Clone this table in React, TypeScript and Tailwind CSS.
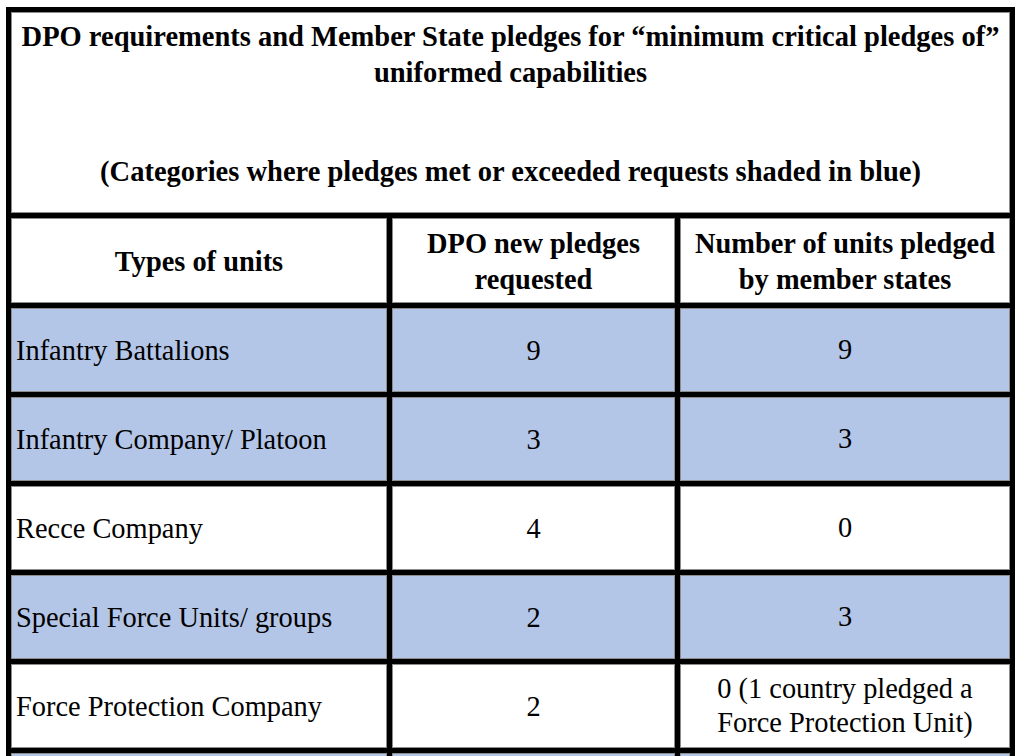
const rows = [
  { unit: "Infantry Battalions", requested: "9", pledged: ["9"], met: true },
  { unit: "Infantry Company/ Platoon", requested: "3", pledged: ["3"], met: true },
  { unit: "Recce Company", requested: "4", pledged: ["0"], met: false },
  { unit: "Special Force Units/ groups", requested: "2", pledged: ["3"], met: true },
  {
    unit: "Force Protection Company",
    requested: "2",
    pledged: ["0 (1 country pledged a", "Force Protection Unit)"],
    met: false,
  },
  { unit: "", requested: "", pledged: [""], met: true },
]

const edge = "shadow-[inset_0_0_0_1px_#8c8c8c]"

export default function App() {
  return (
    <div
      className="h-[756px] w-[1024px] overflow-hidden bg-white pl-[6px] pt-[7px] text-black"
      style={{ fontFamily: '"Liberation Serif", "Times New Roman", serif' }}
    >
      <div className="grid w-[1009px] grid-cols-[376px_283px_330px] gap-[5px] bg-black p-[5px]">
        {/* title */}
        <div className={`col-span-3 h-[201px] bg-white pt-[7px] text-center text-[28.5px] font-bold leading-[36px] ${edge}`}>
          <p>
            DPO requirements and Member State pledges for “minimum critical pledges of”
            <br />
            uniformed capabilities
          </p>
          <p className="mt-[63px]">(Categories where pledges met or exceeded requests shaded in blue)</p>
        </div>

        {/* header row */}
        <div className={`flex h-[85px] items-center justify-center bg-white pt-[2px] text-center text-[28.4px] font-bold leading-[36px] ${edge}`}>
          Types of units
        </div>
        <div className={`flex h-[85px] items-center justify-center bg-white pt-[2px] text-center text-[28.4px] font-bold leading-[36px] ${edge}`}>
          <span>
            DPO new pledges
            <br />
            requested
          </span>
        </div>
        <div className={`flex h-[85px] items-center justify-center bg-white pt-[2px] text-center text-[28.4px] font-bold leading-[36px] ${edge}`}>
          <span>
            Number of units pledged
            <br />
            by member states
          </span>
        </div>

        {rows.map((r, i) => {
          const bg = r.met ? "bg-[#b4c6e7]" : "bg-white"
          return [
            <div key={`u${i}`} className={`flex h-[84px] items-center pl-[5px] pt-[2px] text-[28.4px] leading-[34px] ${bg} ${edge}`}>
              {r.unit}
            </div>,
            <div key={`r${i}`} className={`flex h-[84px] items-center justify-center pt-[2px] text-[28.4px] leading-[34px] ${bg} ${edge}`}>
              {r.requested}
            </div>,
            <div key={`p${i}`} className={`flex h-[84px] flex-col items-center justify-center text-center text-[28.4px] leading-[34px] ${bg} ${edge}`}>
              {r.pledged.map((l, j) => (
                <span key={j}>{l}</span>
              ))}
            </div>,
          ]
        })}
      </div>
    </div>
  )
}
